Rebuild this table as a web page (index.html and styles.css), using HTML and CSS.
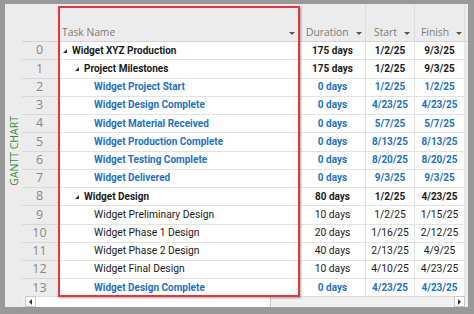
FILE: index.html
```html
<!DOCTYPE html>
<html>
<head>
<meta charset="utf-8">
<link rel="stylesheet" href="styles.css">
</head>
<body>
<div class="frame">
  <div class="panel">
    <div class="side"><span class="side-label">GANTT CHART</span></div>
    <div class="sheet">
      <div class="head">
        <div class="hc num"></div>
        <div class="hc task"><span>Task Name</span><i class="dd"></i></div>
        <div class="hc dur"><span>Duration</span><i class="dd"></i></div>
        <div class="hc start"><span>Start</span><i class="dd"></i></div>
        <div class="hc finish"><span>Finish</span><i class="dd"></i></div>
      </div>
      <div class="body">
        <div class="row sum"><div class="c num">0</div><div class="c task l0"><i class="tri"></i>Widget XYZ Production</div><div class="c dur">175 days</div><div class="c start">1/2/25</div><div class="c finish">9/3/25</div></div>
        <div class="row sum"><div class="c num">1</div><div class="c task l1"><i class="tri"></i>Project Milestones</div><div class="c dur">175 days</div><div class="c start">1/2/25</div><div class="c finish">9/3/25</div></div>
        <div class="row ms"><div class="c num">2</div><div class="c task l2">Widget Project Start</div><div class="c dur">0 days</div><div class="c start">1/2/25</div><div class="c finish">1/2/25</div></div>
        <div class="row ms"><div class="c num">3</div><div class="c task l2">Widget Design Complete</div><div class="c dur">0 days</div><div class="c start">4/23/25</div><div class="c finish">4/23/25</div></div>
        <div class="row ms"><div class="c num">4</div><div class="c task l2">Widget Material Received</div><div class="c dur">0 days</div><div class="c start">5/7/25</div><div class="c finish">5/7/25</div></div>
        <div class="row ms"><div class="c num">5</div><div class="c task l2">Widget Production Complete</div><div class="c dur">0 days</div><div class="c start">8/13/25</div><div class="c finish">8/13/25</div></div>
        <div class="row ms"><div class="c num">6</div><div class="c task l2">Widget Testing Complete</div><div class="c dur">0 days</div><div class="c start">8/20/25</div><div class="c finish">8/20/25</div></div>
        <div class="row ms"><div class="c num">7</div><div class="c task l2">Widget Delivered</div><div class="c dur">0 days</div><div class="c start">9/3/25</div><div class="c finish">9/3/25</div></div>
        <div class="row sum"><div class="c num">8</div><div class="c task l1"><i class="tri"></i>Widget Design</div><div class="c dur">80 days</div><div class="c start">1/2/25</div><div class="c finish">4/23/25</div></div>
        <div class="row"><div class="c num">9</div><div class="c task l2">Widget Preliminary Design</div><div class="c dur">10 days</div><div class="c start">1/2/25</div><div class="c finish">1/15/25</div></div>
        <div class="row"><div class="c num">10</div><div class="c task l2">Widget Phase 1 Design</div><div class="c dur">20 days</div><div class="c start">1/16/25</div><div class="c finish">2/12/25</div></div>
        <div class="row"><div class="c num">11</div><div class="c task l2">Widget Phase 2 Design</div><div class="c dur">40 days</div><div class="c start">2/13/25</div><div class="c finish">4/9/25</div></div>
        <div class="row"><div class="c num">12</div><div class="c task l2">Widget Final Design</div><div class="c dur">10 days</div><div class="c start">4/10/25</div><div class="c finish">4/23/25</div></div>
        <div class="row ms"><div class="c num">13</div><div class="c task l2">Widget Design Complete</div><div class="c dur">0 days</div><div class="c start">4/23/25</div><div class="c finish">4/23/25</div></div>
      </div>
      <div class="hscroll">
        <div class="arrow left"><i></i></div>
        <div class="thumb"></div>
        <div class="track"></div>
        <div class="arrow right"><i></i></div>
      </div>
    </div>
  </div>
  <div class="highlight"></div>
</div>
</body>
</html>
```

FILE: styles.css
```css
* { box-sizing: border-box; }
html, body { margin: 0; padding: 0; }
body { width: 474px; height: 314px; overflow: hidden; font-family: Roboto, "Open Sans", sans-serif; }

.frame {
  position: relative;
  width: 474px;
  height: 314px;
  background: #999999;
  padding: 4px 6px 7px 5px;
}
.panel {
  display: flex;
  height: 100%;
  background: #ececec;
}
.side {
  width: 17px;
  flex: none;
  display: flex;
  align-items: center;
  justify-content: center;
  padding-bottom: 10px;
}
.side-label {
  writing-mode: vertical-rl;
  transform: rotate(180deg);
  color: #3f8c3c;
  font-family: "Open Sans", sans-serif;
  font-size: 10.5px;
  white-space: nowrap;
}
.sheet {
  width: 446px;
  display: flex;
  flex-direction: column;
}
.head {
  height: 38px;
  display: flex;
  flex: none;
  border-bottom: 1px solid #d4d4d4;
}
.hc {
  display: flex;
  align-items: flex-end;
  padding-bottom: 2px;
  color: #7b7b7b;
  font-family: "Open Sans", sans-serif;
  font-size: 10.3px;
  border-right: 1px solid #dcdcdc;
  gap: 7px;
}
.hc.num { border-right: none; }
.hc.task { padding-left: 4px; justify-content: space-between; padding-right: 4px; }
.hc.dur { padding-left: 6px; }
.hc.start { padding-left: 8px; }
.hc.finish { padding-left: 6px; }
.dd {
  display: block;
  width: 0; height: 0;
  border-left: 3px solid transparent;
  border-right: 3px solid transparent;
  border-top: 3px solid #555;
  margin-bottom: 4px;
}

.num { width: 36px; flex: none; }
.task { width: 242px; flex: none; }
.dur { width: 66px; flex: none; }
.start { width: 49px; flex: none; }
.finish { width: 50px; flex: none; }

.body {
  height: 254px;
  overflow: hidden;
  flex: none;
}
.row {
  display: flex;
  height: 18.25px;
  font-size: 10.3px;
  color: #1a1a1a;
}
.c {
  display: flex;
  align-items: center;
  background: #fff;
  border-bottom: 1px solid #e2e2e2;
  white-space: nowrap;
  line-height: 1;
}
.c.num {
  background: #ececec;
  border-bottom: 1px solid #d9d9d9;
  justify-content: center;
  color: #888;
  font-family: "Open Sans", sans-serif;
  font-size: 12.5px;
  padding-right: 1px;
}
.c.dur, .c.start, .c.finish {
  justify-content: center;
  border-right: 1px solid #e2e2e2;
}
.c.task { border-right: 1px solid #e2e2e2; }
.c.l0 { padding-left: 5px; }
.c.l1 { padding-left: 17px; }
.c.l2 { padding-left: 36px; }
.tri {
  display: block;
  width: 0; height: 0;
  border-left: 4px solid transparent;
  border-bottom: 4px solid #333;
  margin-right: 5px;
  margin-top: 1px;
}
.row.sum, .row.ms { font-weight: 700; font-size: 10px; }
.row.ms .c:not(.num) { color: #2471bd; }
.row .c.num { font-weight: 400; }

.hscroll {
  height: 11px;
  flex: none;
  display: flex;
  padding-left: 3px;
  padding-right: 3px;
  background: #f0f0f0;
}
.arrow {
  width: 11px;
  height: 11px;
  background: #fff;
  border: 1px solid #c9c9c9;
  display: flex;
  align-items: center;
  justify-content: center;
}
.arrow i { display: block; width: 0; height: 0; border-top: 3px solid transparent; border-bottom: 3px solid transparent; }
.arrow.left i { border-right: 3px solid #333; }
.arrow.right i { border-left: 3px solid #333; }
.thumb {
  width: 235px;
  background: #fff;
  border-top: 1px solid #dcdcdc;
  border-right: 1px solid #c9c9c9;
}
.track { flex: 1; border-top: 1px solid #dcdcdc; }

.highlight {
  position: absolute;
  left: 58px;
  top: 6px;
  width: 242px;
  height: 291px;
  border: 2px solid #e2373c;
  box-shadow: 1px 1px 2px rgba(0,0,0,0.35);
  pointer-events: none;
}
```
